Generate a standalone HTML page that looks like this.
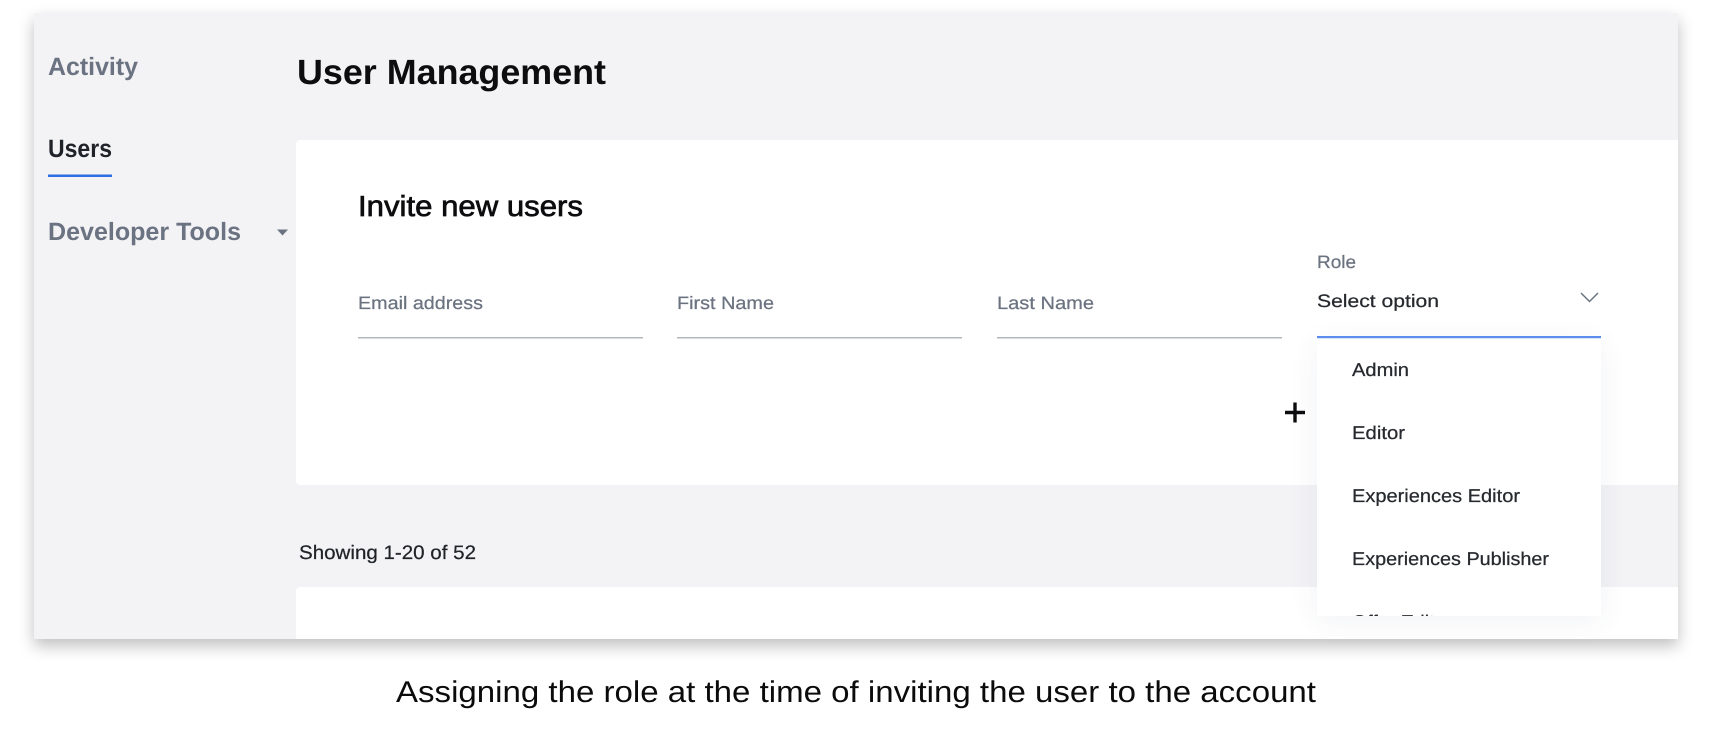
<!DOCTYPE html>
<html lang="en">
<head>
<meta charset="utf-8">
<title>User Management</title>
<style>
html,body{margin:0;padding:0;background:#fff;width:1712px;height:747px;overflow:hidden}
#panel{position:absolute;left:34px;top:13px;width:1644px;height:626px;background:#f3f3f5;box-shadow:0 7px 15px rgba(0,0,0,.25)}
#card1{position:absolute;left:296px;top:140px;width:1382px;height:345px;background:#fff;border-radius:4px 0 0 4px}
#card2{position:absolute;left:296px;top:587px;width:1382px;height:52px;background:#fff;border-radius:4px 0 0 0}
#drop{position:absolute;left:1317px;top:340px;width:284px;height:276px;background:#fff;box-shadow:0 4px 28px rgba(60,70,110,.07)}
svg{position:absolute;left:0;top:0}
text{font-family:"Liberation Sans",sans-serif;}
</style>
</head>
<body>
<div id="panel"></div>
<div id="card1"></div>
<div id="card2"></div>
<div id="drop"></div>
<svg width="1712" height="747" viewBox="0 0 1712 747" xmlns="http://www.w3.org/2000/svg">
<defs><clipPath id="c"><rect x="1317" y="340" width="284" height="276"/></clipPath></defs>
<g text-rendering="geometricPrecision">
<text x="48" y="75" font-size="25" font-weight="700" fill="#6b7382" textLength="90" lengthAdjust="spacingAndGlyphs">Activity</text>
<text x="48" y="157" font-size="25" font-weight="700" fill="#1f2329" textLength="64" lengthAdjust="spacingAndGlyphs">Users</text>
<rect x="48" y="174.500" width="64" height="2.500" fill="#2f6fe4"/>
<text x="48" y="240" font-size="25" font-weight="700" fill="#6b7382" textLength="193" lengthAdjust="spacingAndGlyphs">Developer Tools</text>
<path d="M277 229.500h11l-5.500 6z" fill="#6b7382"/>
<text x="297" y="84" font-size="35" font-weight="700" fill="#0d0d0f" textLength="309" lengthAdjust="spacingAndGlyphs">User Management</text>
<text x="358" y="216" font-size="29" font-weight="400" fill="#0d0d0f" stroke="#0d0d0f" stroke-width=".7" textLength="225" lengthAdjust="spacingAndGlyphs">Invite new users</text>
<g stroke-width=".25">
<text x="358" y="309" font-size="18" fill="#6b7280" stroke="#6b7280" textLength="125" lengthAdjust="spacingAndGlyphs">Email address</text>
<text x="677" y="309" font-size="18" fill="#6b7280" stroke="#6b7280" textLength="97" lengthAdjust="spacingAndGlyphs">First Name</text>
<text x="997" y="309" font-size="18" fill="#6b7280" stroke="#6b7280" textLength="97" lengthAdjust="spacingAndGlyphs">Last Name</text>
<text x="1317" y="268" font-size="18" fill="#6b7280" stroke="#6b7280" textLength="39" lengthAdjust="spacingAndGlyphs">Role</text>
<text x="1317" y="307" font-size="18" fill="#26292e" stroke="#26292e" textLength="122" lengthAdjust="spacingAndGlyphs">Select option</text>
</g>
<rect x="358" y="337" width="285" height="1.500" fill="#b4b7bc"/>
<rect x="677" y="337" width="285" height="1.500" fill="#b4b7bc"/>
<rect x="997" y="337" width="285" height="1.500" fill="#b4b7bc"/>
<path d="M1581 293l8.500 8.500 8.500-8.500" fill="none" stroke="#6b7280" stroke-width="1.500"/>
<rect x="1317" y="336" width="284" height="2.200" fill="#5b8def"/>
<path d="M1295 402.500v20M1285 412.500h20" fill="none" stroke="#0d0d0f" stroke-width="3.400"/>
<text x="299" y="559" font-size="19.500" fill="#1f2226" stroke="#1f2226" stroke-width=".25" textLength="177" lengthAdjust="spacingAndGlyphs">Showing 1-20 of 52</text>
<g font-size="18.500" fill="#26292e" stroke="#26292e" stroke-width=".25">
<text x="1352" y="376" textLength="57" lengthAdjust="spacingAndGlyphs">Admin</text>
<text x="1352" y="439" textLength="53" lengthAdjust="spacingAndGlyphs">Editor</text>
<text x="1352" y="502" textLength="168" lengthAdjust="spacingAndGlyphs">Experiences Editor</text>
<text x="1352" y="565" textLength="197" lengthAdjust="spacingAndGlyphs">Experiences Publisher</text>
<text x="1352" y="628" clip-path="url(#c)" textLength="100" lengthAdjust="spacingAndGlyphs">Offer Editor</text>
</g>
<text x="396" y="702" font-size="30" fill="#0b0b0b" textLength="920" lengthAdjust="spacingAndGlyphs">Assigning the role at the time of inviting the user to the account</text>
</g>
</svg>
</body>
</html>
